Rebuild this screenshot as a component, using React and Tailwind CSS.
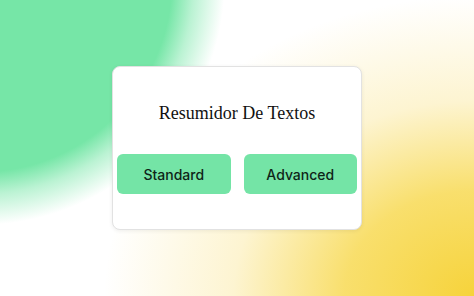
const options = ["Standard", "Advanced"];

const App = () => {
    return (
        <div className="flex h-[296px] w-full items-center justify-center overflow-hidden bg-white bg-[radial-gradient(circle_at_-20px_-20px,#76e6a7_0px,#76e6a7_192px,rgba(118,230,167,0.5)_214px,rgba(118,230,167,0)_245px),radial-gradient(ellipse_370px_300px_at_100%_100%,#f6d33b_0%,rgba(247,215,72,0.8)_35%,rgba(250,228,140,0.4)_65%,rgba(255,255,255,0)_100%)]">
            <div className="flex h-[164px] w-[250px] flex-col items-center rounded-lg border border-[#e2e2e2] bg-white px-[4px] pt-[32px] shadow-[0_1px_4px_rgba(0,0,0,0.07)]">
                <h1 className="text-[18px] leading-7 text-[#111111] font-['Liberation_Serif',serif]">Resumidor De Textos</h1>
                <div className="mt-[27px] flex w-full gap-[13px]">
                    {options.map((label) => (
                        <button
                            key={label}
                            className="flex h-[40px] flex-1 items-center justify-center rounded-md bg-[#74e4a6] text-[14px] font-medium text-[#0f2418] font-['Inter',sans-serif]"
                        >
                            {label}
                        </button>
                    ))}
                </div>
            </div>
        </div>
    );
};

export default App;
